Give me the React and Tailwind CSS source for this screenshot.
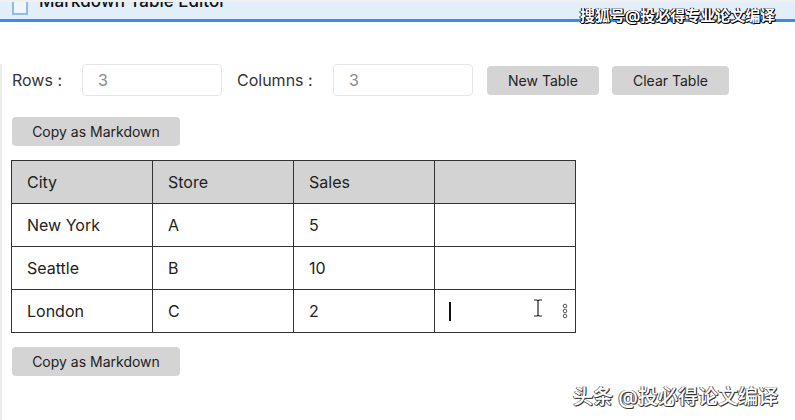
import React from 'react';

const rows = [
  ['New York', 'A', '5', ''],
  ['Seattle', 'B', '10', ''],
  ['London', 'C', '2', ''],
];

const CopyButton = () => (
  <button className="w-[168px] h-[29px] bg-[#d4d4d4] rounded-[4px] text-[14px] text-[#222]">Copy as Markdown</button>
);

const App = () => {
  return (
    <div className="w-[795px] h-[420px] bg-white overflow-hidden relative" style={{ fontFamily: 'Inter, "Noto Sans CJK SC", sans-serif' }}>
      <div className="h-[19px] bg-[#e2eef9] border-t-2 border-[#f0f0f0] flex items-start overflow-hidden">
        <div className="ml-[12px] -mt-[4px] w-[16px] h-[17px] shrink-0 border-2 border-[#8fbbe8] bg-[#eef5fc]"></div>
        <div className="ml-[11px] -mt-[9px] text-[17px] leading-[17px] font-medium text-[#111] whitespace-nowrap">Markdown Table Editor</div>
      </div>
      <div className="h-[3px] bg-[#3a8ee2]"></div>
      <div className="border-l-2 border-[#ececec] h-[398px] pl-[10px]">
        <div className="flex items-center mt-[42px] h-[32px]">
          <span className="text-[16px] text-[#333] w-[70px]">Rows :</span>
          <div className="w-[140px] h-[32px] border border-[#e6e6e6] rounded-[4px] flex items-center pl-[15px] text-[16px] text-[#888]">3</div>
          <span className="ml-[15px] text-[16px] text-[#333] w-[96px]">Columns :</span>
          <div className="w-[140px] h-[32px] border border-[#e6e6e6] rounded-[4px] flex items-center pl-[15px] text-[16px] text-[#888]">3</div>
          <button className="ml-[14px] w-[112px] h-[29px] bg-[#d4d4d4] rounded-[4px] text-[14px] text-[#222]">New Table</button>
          <button className="ml-[13px] w-[117px] h-[29px] bg-[#d4d4d4] rounded-[4px] text-[14px] text-[#222]">Clear Table</button>
        </div>
        <div className="mt-[21px]"><CopyButton /></div>
        <table className="mt-[14px] -ml-[1px] border-collapse text-[16px] text-[#222]">
          <thead>
            <tr className="bg-[#d3d3d3] h-[43px]">
              {['City', 'Store', 'Sales', ''].map((h, i) => (
                <th key={i} className="w-[141px] border border-[#333] text-left font-normal pl-[15px]">{h}</th>
              ))}
            </tr>
          </thead>
          <tbody>
            {rows.map((r, ri) => (
              <tr key={ri} className="h-[43px]">
                {r.map((c, ci) => (
                  <td key={ci} className="w-[141px] border border-[#333] pl-[15px] relative">
                    {c}
                    {ri === 2 && ci === 3 && (
                      <>
                        <span className="absolute left-[14px] top-[12px] w-[2px] h-[19px] bg-[#111]"></span>
                        <svg className="absolute left-[98px] top-[9px]" width="10" height="18" viewBox="0 0 10 18" fill="none" stroke="#222" strokeWidth="1.2">
                          <path d="M1 1h3M6 1h3M5 2v14M1 17h3M6 17h3M4 1l1 1l1-1M4 17l1-1l1 1" />
                        </svg>
                        <svg className="absolute left-[127px] top-[13px]" width="6" height="16" viewBox="0 0 6 16" fill="none" stroke="#555" strokeWidth="1">
                          <circle cx="3" cy="3" r="1.8" />
                          <circle cx="3" cy="8" r="1.8" />
                          <circle cx="3" cy="13" r="1.8" />
                        </svg>
                      </>
                    )}
                  </td>
                ))}
              </tr>
            ))}
          </tbody>
        </table>
        <div className="mt-[14px]"><CopyButton /></div>
      </div>
      <div className="absolute left-[580px] top-[6px] text-[15px] leading-[20px] font-bold text-white" style={{ textShadow: '1px 1px 0 #000, -1px 0 0 #000, 0 1px 0 #000, 1px 0 0 #000' }}>搜狐号@投必得专业论文编译</div>
      <div className="absolute left-[573px] top-[385px] text-[20px] leading-[24px] font-medium text-white" style={{ textShadow: '1px 1px 0 #333, -1px 0 0 #666, 0 1px 0 #666, 1px 0 0 #666' }}>头条 @投必得论文编译</div>
    </div>
  );
};

export default App;
